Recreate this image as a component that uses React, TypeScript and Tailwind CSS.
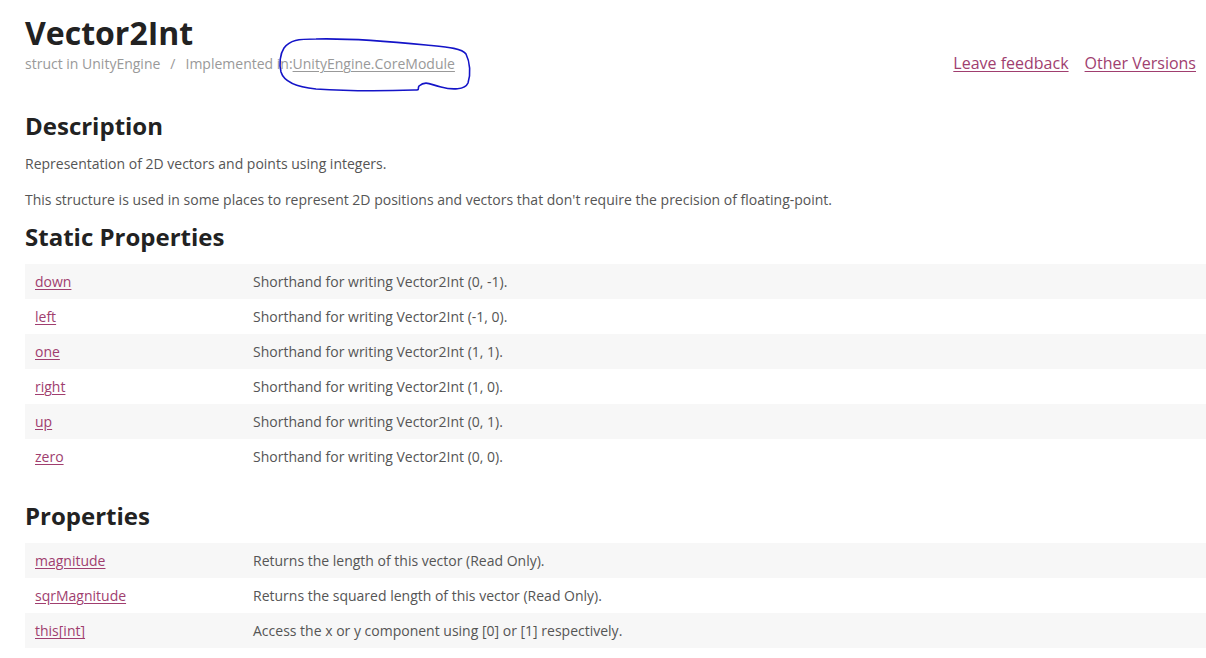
const staticProps = [
  { name: 'down', desc: 'Shorthand for writing Vector2Int (0, -1).' },
  { name: 'left', desc: 'Shorthand for writing Vector2Int (-1, 0).' },
  { name: 'one', desc: 'Shorthand for writing Vector2Int (1, 1).' },
  { name: 'right', desc: 'Shorthand for writing Vector2Int (1, 0).' },
  { name: 'up', desc: 'Shorthand for writing Vector2Int (0, 1).' },
  { name: 'zero', desc: 'Shorthand for writing Vector2Int (0, 0).' },
]

const props = [
  { name: 'magnitude', desc: 'Returns the length of this vector (Read Only).' },
  { name: 'sqrMagnitude', desc: 'Returns the squared length of this vector (Read Only).' },
  { name: 'this[int]', desc: 'Access the x or y component using [0] or [1] respectively.' },
]

function MemberTable({ rows }: { rows: { name: string; desc: string }[] }) {
  return (
    <div className="flex flex-col">
      {rows.map((r, i) => (
        <div
          key={r.name}
          className={`flex h-[35px] items-center text-[14px] ${i % 2 === 0 ? 'bg-[#f7f7f7]' : 'bg-white'}`}
        >
          <div className="w-[228px] shrink-0 pl-[10px]">
            <a href="#" className="text-[#a03e6f] underline underline-offset-2">
              {r.name}
            </a>
          </div>
          <div className="text-[#555]">{r.desc}</div>
        </div>
      ))}
    </div>
  )
}

export default function App() {
  return (
    <div className="relative min-h-[658px] bg-white pl-[25px] font-['Open_Sans',sans-serif] text-[#555]">
      <h1 className="pt-[13px] text-[32px] font-bold leading-[40px] text-[#222]">Vector2Int</h1>

      <div className="-mt-[1px] flex items-baseline justify-between pr-[10px] leading-[22px]">
        <div className="text-[14px] text-[#999]">
          struct in UnityEngine<span className="mx-[10px]">/</span>Implemented in:
          <a href="#" className="text-[#999] underline underline-offset-2">
            UnityEngine.CoreModule
          </a>
        </div>
        <div className="flex gap-[16px] text-[16px]">
          <a href="#" className="text-[#a03e6f] underline underline-offset-2">
            Leave feedback
          </a>
          <a href="#" className="text-[#a03e6f] underline underline-offset-2">
            Other Versions
          </a>
        </div>
      </div>

      <h2 className="mt-[36px] text-[24px] font-bold leading-[30px] text-[#222]">Description</h2>
      <p className="mt-[12px] text-[14px] leading-[22px]">Representation of 2D vectors and points using integers.</p>
      <p className="mt-[14px] text-[14px] leading-[22px]">
        This structure is used in some places to represent 2D positions and vectors that don't require the precision of
        floating-point.
      </p>

      <h2 className="mt-[11px] text-[24px] font-bold leading-[30px] text-[#222]">Static Properties</h2>
      <div className="mt-[12px]">
        <MemberTable rows={staticProps} />
      </div>

      <h2 className="mt-[27px] text-[24px] font-bold leading-[30px] text-[#222]">Properties</h2>
      <div className="mt-[12px]">
        <MemberTable rows={props} />
      </div>

      {/* hand-drawn annotation circling the module link */}
      <svg
        className="pointer-events-none absolute left-[276px] top-[34px]"
        width="200"
        height="60"
        viewBox="0 0 200 60"
        fill="none"
      >
        <path
          d="M8 14 C14 6 22 5 40 5 C80 4 120 8 150 11 C170 13 186 14 190 20 C194 28 195 40 192 49 C189 56 176 56 165 53 C155 51 150 46 143 52 C141 55 145 56 138 56 C110 57 70 57 40 55 C20 53 8 48 5 38 C3 30 4 20 8 14 Z"
          stroke="#1414c8"
          strokeWidth="1.6"
          strokeLinecap="round"
        />
      </svg>
    </div>
  )
}
